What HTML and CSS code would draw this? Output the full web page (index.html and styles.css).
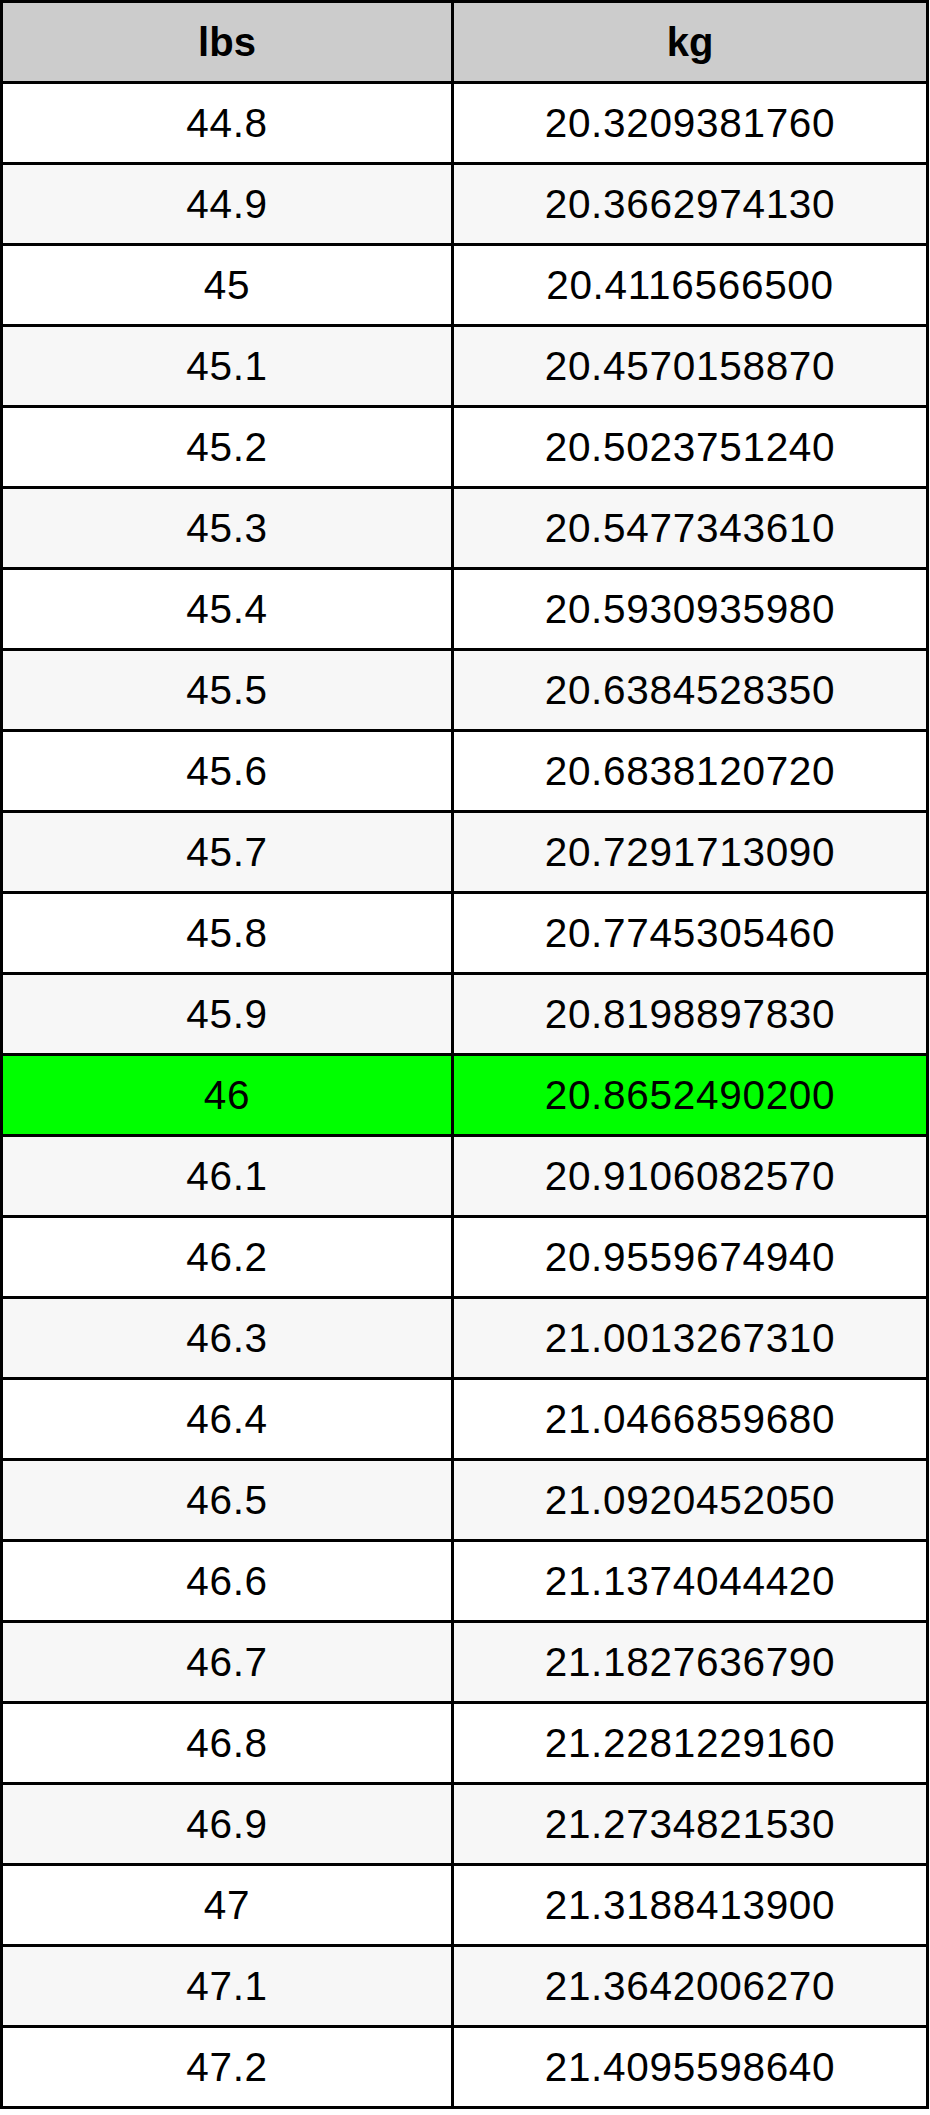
FILE: index.html
```html
<!DOCTYPE html>
<html lang="en">
<head>
<meta charset="utf-8">
<title>lbs to kg</title>
<link rel="stylesheet" href="styles.css">
</head>
<body>
<table class="conv">
<thead>
<tr><th class="c1">lbs</th><th class="c2">kg</th></tr>
</thead>
<tbody>
<tr><td>44.8</td><td>20.3209381760</td></tr>
<tr class="alt"><td>44.9</td><td>20.3662974130</td></tr>
<tr><td>45</td><td>20.4116566500</td></tr>
<tr class="alt"><td>45.1</td><td>20.4570158870</td></tr>
<tr><td>45.2</td><td>20.5023751240</td></tr>
<tr class="alt"><td>45.3</td><td>20.5477343610</td></tr>
<tr><td>45.4</td><td>20.5930935980</td></tr>
<tr class="alt"><td>45.5</td><td>20.6384528350</td></tr>
<tr><td>45.6</td><td>20.6838120720</td></tr>
<tr class="alt"><td>45.7</td><td>20.7291713090</td></tr>
<tr><td>45.8</td><td>20.7745305460</td></tr>
<tr class="alt"><td>45.9</td><td>20.8198897830</td></tr>
<tr class="hl"><td>46</td><td>20.8652490200</td></tr>
<tr class="alt"><td>46.1</td><td>20.9106082570</td></tr>
<tr><td>46.2</td><td>20.9559674940</td></tr>
<tr class="alt"><td>46.3</td><td>21.0013267310</td></tr>
<tr><td>46.4</td><td>21.0466859680</td></tr>
<tr class="alt"><td>46.5</td><td>21.0920452050</td></tr>
<tr><td>46.6</td><td>21.1374044420</td></tr>
<tr class="alt"><td>46.7</td><td>21.1827636790</td></tr>
<tr><td>46.8</td><td>21.2281229160</td></tr>
<tr class="alt"><td>46.9</td><td>21.2734821530</td></tr>
<tr><td>47</td><td>21.3188413900</td></tr>
<tr class="alt"><td>47.1</td><td>21.3642006270</td></tr>
<tr><td>47.2</td><td>21.4095598640</td></tr>
</tbody>
</table>
</body>
</html>
```

FILE: styles.css
```css
html, body {
  margin: 0;
  padding: 0;
  background: #ffffff;
}

body {
  font-family: "Liberation Sans", Arial, Helvetica, sans-serif;
  color: #000000;
}

.conv {
  border-collapse: separate;
  border-spacing: 0;
  table-layout: fixed;
  width: 929px;
  border-top: 3px solid #000;
  border-left: 3px solid #000;
}

.conv th,
.conv td {
  height: 81px;
  padding: 0;
  box-sizing: border-box;
  border-right: 3px solid #000;
  border-bottom: 3px solid #000;
  text-align: center;
  vertical-align: middle;
  line-height: 1;
}

.conv th {
  background: #cccccc;
  font-weight: bold;
  font-size: 40px;
}

.conv td {
  font-size: 40.5px;
  letter-spacing: 0.7px;
}

.conv .c1 {
  width: 451px;
}

.conv .c2 {
  width: 475px;
}

.conv tr.alt td {
  background: #f7f7f7;
}

.conv tr.hl td {
  background: #00ff00;
}
```
